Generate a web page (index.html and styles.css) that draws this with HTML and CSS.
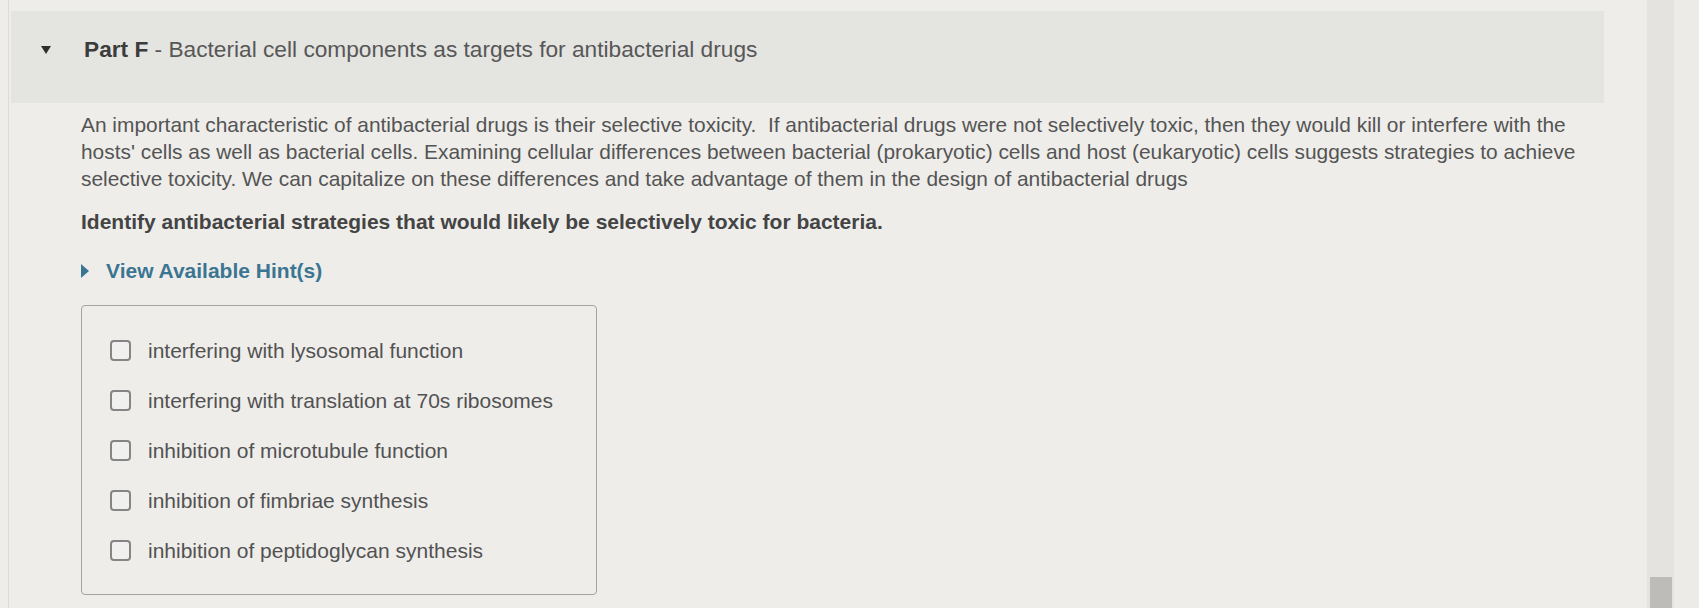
FILE: index.html
```html
<!DOCTYPE html>
<html lang="en">
<head>
<meta charset="utf-8">
<title>Part F</title>
<link rel="stylesheet" href="styles.css">
</head>
<body>
<div class="shell">
  <div class="main">
    <div class="part-header">
      <svg class="caret-down" width="10" height="8" viewBox="0 0 10 8"><polygon points="0,0 10,0 5,8" fill="#2e2e2e"/></svg>
      <h2 class="part-title"><b>Part F</b> - Bacterial cell components as targets for antibacterial drugs</h2>
    </div>
    <div class="content">
      <p class="intro">An important characteristic of antibacterial drugs is their selective toxicity.&nbsp; If antibacterial drugs were not selectively toxic, then they would kill or interfere with the hosts' cells as well as bacterial cells. Examining cellular differences between bacterial (prokaryotic) cells and host (eukaryotic) cells suggests strategies to achieve selective toxicity. We can capitalize on these differences and take advantage of them in the design of antibacterial drugs</p>
      <p class="question">Identify antibacterial strategies that would likely be selectively toxic for bacteria.</p>
      <div class="hint">
        <svg class="caret-right" width="8" height="14" viewBox="0 0 8 14"><polygon points="0,0 8,7 0,14" fill="#3a7592"/></svg>
        <span>View Available Hint(s)</span>
      </div>
      <div class="choices">
        <label class="choice"><span class="box"></span><span>interfering with lysosomal function</span></label>
        <label class="choice"><span class="box"></span><span>interfering with translation at 70s ribosomes</span></label>
        <label class="choice"><span class="box"></span><span>inhibition of microtubule function</span></label>
        <label class="choice"><span class="box"></span><span>inhibition of fimbriae synthesis</span></label>
        <label class="choice"><span class="box"></span><span>inhibition of peptidoglycan synthesis</span></label>
      </div>
    </div>
  </div>
  <div class="scrollbar"><div class="thumb"></div></div>
  <div class="edge"></div>
</div>
</body>
</html>
```
FILE: styles.css
```css
html, body {
  margin: 0;
  padding: 0;
}
body {
  background: #eeedea;
  font-family: "Liberation Sans", Arial, sans-serif;
  color: #545454;
  width: 1699px;
  height: 608px;
  overflow: hidden;
}
.shell {
  display: flex;
  height: 608px;
}
.main {
  width: 1639px;
  padding-top: 11px;
  border-left: 1px solid #dcdbd8;
  margin-left: 8px;
  box-sizing: border-box;
}
.part-header {
  margin-left: 2px;
  width: 1593px;
  height: 92px;
  background: #e4e4e1;
  display: flex;
  align-items: flex-start;
  padding: 34px 0 0 30px;
  box-sizing: border-box;
  gap: 33px;
}
.caret-down {
  flex: none;
  margin-top: 1px;
}
.part-title {
  margin: -9px 0 0 0;
  font-size: 22.7px;
  line-height: 26px;
  font-weight: normal;
  color: #575757;
}
.part-title b {
  color: #3c3c3c;
  font-weight: bold;
}
.content {
  padding-left: 72px;
}
.intro {
  margin: 8px 0 0 0;
  width: 1515px;
  font-size: 20.9px;
  line-height: 27px;
}
.question {
  margin: 16px 0 0 0;
  font-size: 21px;
  line-height: 27px;
  font-weight: bold;
  color: #444444;
}
.hint {
  margin-top: 22px;
  display: flex;
  align-items: center;
  gap: 17px;
  padding-left: 0;
  font-size: 21px;
  line-height: 27px;
  font-weight: bold;
  color: #3c7592;
}
.choices {
  margin-top: 21px;
  width: 516px;
  box-sizing: border-box;
  border: 1px solid #a3a3a0;
  border-radius: 4px;
  padding: 19px 0 19px 28px;
  display: flex;
  flex-direction: column;
}
.choice {
  height: 50px;
  display: flex;
  align-items: center;
  gap: 17px;
  font-size: 21px;
  line-height: 27px;
  color: #525252;
}
.box {
  flex: none;
  width: 21px;
  height: 21px;
  box-sizing: border-box;
  border: 2px solid #858585;
  border-radius: 4px;
  background: #f0f0ee;
}
.scrollbar {
  width: 27px;
  background: #e4e3e0;
  display: flex;
  flex-direction: column;
  justify-content: flex-end;
  align-items: center;
}
.thumb {
  width: 22px;
  height: 31px;
  background: #bdbcb8;
}
.edge {
  flex: 1;
  background: #ecebe8;
}
```
